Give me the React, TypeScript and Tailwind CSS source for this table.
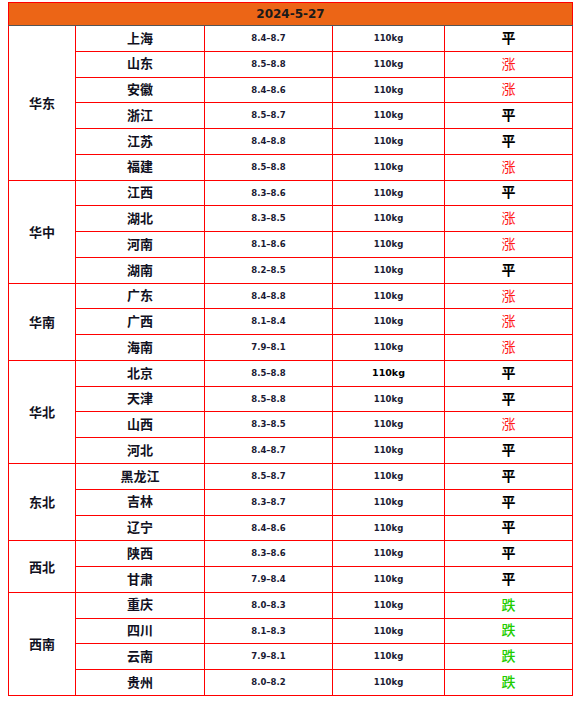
import * as React from 'react';

type Trend = '平' | '涨' | '跌';

interface Row {
    city: string;
    range: string;
    trend: Trend;
}

interface Region {
    name: string;
    rows: Row[];
}

const regions: Region[] = [
    {
        name: '华东', rows: [
            { city: '上海', range: '8.4–8.7', trend: '平' },
            { city: '山东', range: '8.5–8.8', trend: '涨' },
            { city: '安徽', range: '8.4–8.6', trend: '涨' },
            { city: '浙江', range: '8.5–8.7', trend: '平' },
            { city: '江苏', range: '8.4–8.8', trend: '平' },
            { city: '福建', range: '8.5–8.8', trend: '涨' },
        ]
    },
    {
        name: '华中', rows: [
            { city: '江西', range: '8.3–8.6', trend: '平' },
            { city: '湖北', range: '8.3–8.5', trend: '涨' },
            { city: '河南', range: '8.1–8.6', trend: '涨' },
            { city: '湖南', range: '8.2–8.5', trend: '平' },
        ]
    },
    {
        name: '华南', rows: [
            { city: '广东', range: '8.4–8.8', trend: '涨' },
            { city: '广西', range: '8.1–8.4', trend: '涨' },
            { city: '海南', range: '7.9–8.1', trend: '涨' },
        ]
    },
    {
        name: '华北', rows: [
            { city: '北京', range: '8.5–8.8', trend: '平' },
            { city: '天津', range: '8.5–8.8', trend: '平' },
            { city: '山西', range: '8.3–8.5', trend: '涨' },
            { city: '河北', range: '8.4–8.7', trend: '平' },
        ]
    },
    {
        name: '东北', rows: [
            { city: '黑龙江', range: '8.5–8.7', trend: '平' },
            { city: '吉林', range: '8.3–8.7', trend: '平' },
            { city: '辽宁', range: '8.4–8.6', trend: '平' },
        ]
    },
    {
        name: '西北', rows: [
            { city: '陕西', range: '8.3–8.6', trend: '平' },
            { city: '甘肃', range: '7.9–8.4', trend: '平' },
        ]
    },
    {
        name: '西南', rows: [
            { city: '重庆', range: '8.0–8.3', trend: '跌' },
            { city: '四川', range: '8.1–8.3', trend: '跌' },
            { city: '云南', range: '7.9–8.1', trend: '跌' },
            { city: '贵州', range: '8.0–8.2', trend: '跌' },
        ]
    },
];

// 平 is printed heavier than the coloured marks
const trendStyle: Record<Trend, string> = {
    '平': 'text-black font-bold',
    '涨': 'text-[#ff1a1a] font-normal',
    '跌': 'text-[#22cc00] font-medium',
};

const cjk = "font-['Noto_Sans_CJK_SC',sans-serif]";
const num = "font-['DejaVu_Sans','Noto_Sans_CJK_SC',sans-serif]";

export default function App() {
    return (
        <div className="bg-white w-[585px] h-[702px] pl-[8px] pt-[2px]">
            <table className="table-fixed border-collapse w-[564px]">
                <colgroup>
                    <col className="w-[67px]" />
                    <col className="w-[129px]" />
                    <col className="w-[128px]" />
                    <col className="w-[112px]" />
                    <col className="w-[128px]" />
                </colgroup>
                <thead>
                    <tr className="h-[23px]">
                        <th colSpan={5} className={`bg-[#ec6516] border border-[#ff0000] border-b-[#555555] text-center text-[12px] font-bold text-[#1a1a1a] p-0 ${num}`}>
                            2024-5-27
                        </th>
                    </tr>
                </thead>
                <tbody>
                    {regions.map(region => region.rows.map((row, i) => (
                        <tr key={region.name + row.city} className="h-[25.77px]">
                            {i === 0 && (
                                <td rowSpan={region.rows.length} className={`border border-[#ff0000] text-center text-[13px] font-bold text-[#111122] p-0 ${cjk}`}>
                                    {region.name}
                                </td>
                            )}
                            <td className={`border border-[#ff0000] text-center text-[13px] font-bold text-[#111122] p-0 pb-[2px] ${cjk}`}>
                                {row.city}
                            </td>
                            <td className={`border border-[#ff0000] text-center text-[8.5px] font-bold text-[#1a1a33] p-0 ${num}`}>
                                {row.range}
                            </td>
                            <td className={`border border-[#ff0000] text-center font-bold p-0 ${num} ${row.city === '北京' ? 'text-[9.5px] text-black' : 'text-[8.5px] text-[#1a1a33]'}`}>
                                110kg
                            </td>
                            <td className={`border border-[#ff0000] text-center text-[14px] p-0 pb-[2px] ${cjk} ${trendStyle[row.trend]}`}>
                                {row.trend}
                            </td>
                        </tr>
                    )))}
                </tbody>
            </table>
        </div>
    );
}
